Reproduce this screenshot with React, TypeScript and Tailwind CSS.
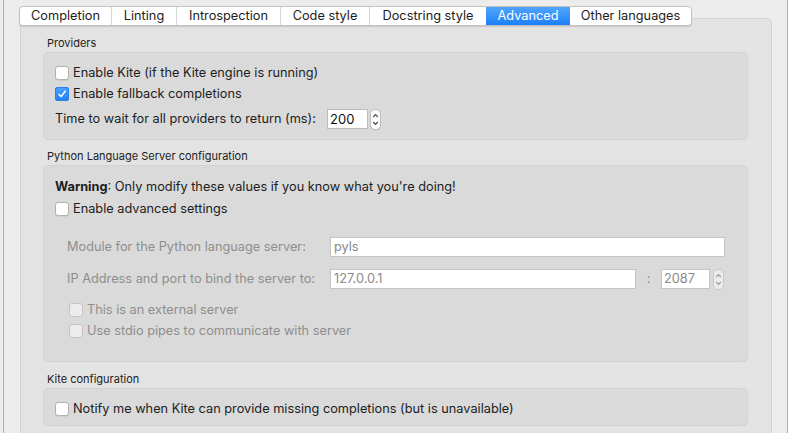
const tabs = [
  { label: "Completion", w: "w-[91px]" },
  { label: "Linting", w: "w-[65px]" },
  { label: "Introspection", w: "w-[104px]" },
  { label: "Code style", w: "w-[89px]" },
  { label: "Docstring style", w: "w-[117px]" },
  { label: "Advanced", w: "w-[84px]", active: true },
  { label: "Other languages", w: "w-[121px]" },
];

function CheckBox({ checked, disabled }: { checked?: boolean; disabled?: boolean }) {
  if (checked) {
    return (
      <span className="flex h-[14px] w-[14px] shrink-0 items-center justify-center rounded-[3px] bg-gradient-to-b from-[#4ba3fd] to-[#1b7ff9] shadow-[inset_0_0_0_1px_#2a7fe6]">
        <svg width="10" height="10" viewBox="0 0 10 10">
          <polyline points="2,5.4 4.1,7.6 8.2,2.2" fill="none" stroke="#fff" strokeWidth="1.5" strokeLinecap="round" strokeLinejoin="round" />
        </svg>
      </span>
    );
  }
  return (
    <span
      className={
        disabled
          ? "h-[14px] w-[14px] shrink-0 rounded-[3px] border border-[#c4c4c4] bg-[#ececec]"
          : "h-[14px] w-[14px] shrink-0 rounded-[3px] border border-[#b3b3b3] bg-white shadow-[0_0.5px_0.5px_rgba(0,0,0,0.12)]"
      }
    />
  );
}

function Stepper({ disabled }: { disabled?: boolean }) {
  const c = disabled ? "#9a9a9a" : "#444";
  return (
    <span
      className={
        disabled
          ? "flex h-[21px] w-[11px] items-center justify-center rounded-[5px] border border-[#c8c8c8] bg-[#ececec]"
          : "flex h-[21px] w-[11px] items-center justify-center rounded-[5px] border border-[#bdbdbd] bg-white shadow-[0_0.5px_0.5px_rgba(0,0,0,0.1)]"
      }
    >
      <svg width="7" height="15" viewBox="0 0 7 15">
        <polyline points="1.2,5 3.5,2.6 5.8,5" fill="none" stroke={c} strokeWidth="1.1" />
        <polyline points="1.2,10 3.5,12.4 5.8,10" fill="none" stroke={c} strokeWidth="1.1" />
      </svg>
    </span>
  );
}

function Check({ label, checked, disabled }: { label: string; checked?: boolean; disabled?: boolean }) {
  return (
    <div className="flex h-[21px] items-center gap-[4px]">
      <CheckBox checked={checked} disabled={disabled} />
      <span className={disabled ? "text-[#8e8e8e]" : "text-[#1d1d1d]"}>{label}</span>
    </div>
  );
}

function GroupLabel({ children, className = "" }: { children: React.ReactNode; className?: string }) {
  return <div className={"pl-[4px] text-[11px] leading-[14px] text-[#1d1d1d] " + className}>{children}</div>;
}

function Group({ children, className = "" }: { children: React.ReactNode; className?: string }) {
  return (
    <div className={"mt-[2px] rounded-[5px] border border-[#d2d2d2] bg-[#dadada] " + className}>{children}</div>
  );
}

export default function App() {
  return (
    <div
      className="h-[433px] w-[788px] overflow-hidden bg-[#ececec] pl-[3px] text-[12.75px] leading-[16px]"
      style={{ fontFamily: "Inter, 'Liberation Sans', Arial, sans-serif" }}
    >
      <div className="flex h-full flex-col border-l border-r border-[#b0b0b0] pl-[15px] pr-[15px] pt-[6px]">
        {/* tabs */}
        <div className="relative z-10 flex h-[20px] w-fit overflow-hidden rounded-[4px] border border-[#c2c2c2] bg-white shadow-[0_1px_1px_rgba(0,0,0,0.12)]">
          {tabs.map((t, i) => (
            <div
              key={t.label}
              className={
                (t.active
                  ? "bg-gradient-to-b from-[#4fa5fd] to-[#1b7ff9] text-white "
                  : "text-[#1d1d1d] ") +
                (i > 0 && !t.active && !tabs[i - 1].active ? "border-l border-[#d6d6d6] " : "") +
                "flex items-center justify-center pt-[1px] leading-none " +
                t.w
              }
            >
              {t.label}
            </div>
          ))}
        </div>

        {/* pane */}
        <div className="-mt-[8px] ml-[1px] flex-1 rounded-t-[6px] border border-b-0 border-[#d3d3d3] bg-[#e3e3e3] pl-[22px] pr-[23px] pt-[17px]">
          <GroupLabel>Providers</GroupLabel>
          <Group className="pl-[11px] pt-[9px] pb-[10px]">
            <Check label="Enable Kite (if the Kite engine is running)" />
            <Check label="Enable fallback completions" checked />
            <div className="mt-[5px] flex h-[20px] items-center">
              <span className="w-[272px] text-[#1d1d1d]">Time to wait for all providers to return (ms):</span>
              <span className="flex h-[20px] w-[41px] items-center border border-[#bcbcbc] bg-white pl-[2px] text-[13px] text-[#111]">
                200
              </span>
              <span className="ml-[2px]">
                <Stepper />
              </span>
            </div>
          </Group>

          <GroupLabel className="mt-[9px]">Python Language Server configuration</GroupLabel>
          <Group className="pl-[11px] pt-[10px] pb-[20px]">
            <div className="flex h-[22px] items-center text-[#1d1d1d]">
              <span className="font-bold">Warning</span>: Only modify these values if you know what you're doing!
            </div>
            <Check label="Enable advanced settings" />

            <div className="mt-[18px] flex h-[20px] items-center pl-[12px]">
              <span className="w-[263px] text-[#8e8e8e]">Module for the Python language server:</span>
              <span className="flex h-[20px] w-[395px] items-center border border-[#c4c4c4] bg-white pl-[3px] text-[#8a8a8a]">
                pyls
              </span>
            </div>
            <div className="mt-[12px] flex h-[20px] items-center pl-[12px]">
              <span className="w-[263px] text-[#8e8e8e]">IP Address and port to bind the server to:</span>
              <span className="flex h-[20px] w-[306px] items-center border border-[#c4c4c4] bg-white pl-[3px] text-[#8a8a8a]">
                127.0.0.1
              </span>
              <span className="w-[25px] text-center text-[#8e8e8e]">:</span>
              <span className="flex h-[20px] w-[49px] items-center border border-[#c4c4c4] bg-white pl-[2px] text-[#8a8a8a]">
                2087
              </span>
              <span className="ml-[3px]">
                <Stepper disabled />
              </span>
            </div>
            <div className="mt-[10px] pl-[14px]">
              <Check label="This is an external server" disabled />
              <Check label="Use stdio pipes to communicate with server" disabled />
            </div>
          </Group>

          <GroupLabel className="mt-[10px]">Kite configuration</GroupLabel>
          <Group className="pl-[11px] pt-[9px] pb-[6px]">
            <Check label="Notify me when Kite can provide missing completions (but is unavailable)" />
          </Group>
        </div>
      </div>
    </div>
  );
}
